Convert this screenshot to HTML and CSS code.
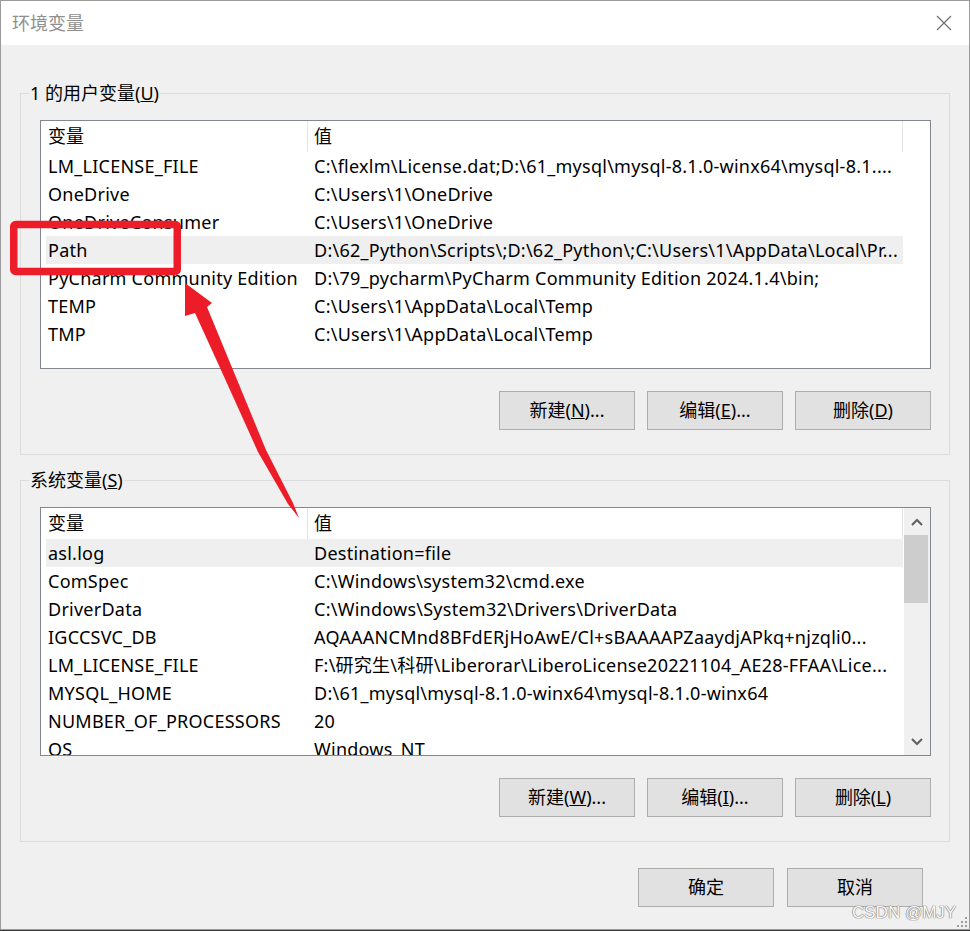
FILE: index.html
```html
<!DOCTYPE html>
<html lang="zh-CN">
<head>
<meta charset="utf-8">
<title>环境变量</title>
<link rel="stylesheet" href="styles.css">
</head>
<body>
<div class="window">
  <div class="titlebar">
    <span class="title">环境变量</span>
    <svg class="close" viewBox="0 0 16 16" width="16" height="16"><path d="M1 1L15 15M15 1L1 15" stroke="#6f6f6f" stroke-width="1.2" fill="none"/></svg>
  </div>
  <div class="content">
    <fieldset class="group">
      <legend>1 的用户变量(<u>U</u>)</legend>
      <div class="list">
        <div class="list-body">
          <div class="row head"><div class="c1">变量</div><div class="c2">值</div></div>
          <div class="row"><div class="c1">LM_LICENSE_FILE</div><div class="c2">C:\flexlm\License.dat;D:\61_mysql\mysql-8.1.0-winx64\mysql-8.1....</div></div>
          <div class="row"><div class="c1">OneDrive</div><div class="c2">C:\Users\1\OneDrive</div></div>
          <div class="row"><div class="c1">OneDriveConsumer</div><div class="c2">C:\Users\1\OneDrive</div></div>
          <div class="row sel"><div class="c1">Path</div><div class="c2">D:\62_Python\Scripts\;D:\62_Python\;C:\Users\1\AppData\Local\Pr...</div></div>
          <div class="row"><div class="c1">PyCharm Community Edition</div><div class="c2">D:\79_pycharm\PyCharm Community Edition 2024.1.4\bin;</div></div>
          <div class="row"><div class="c1">TEMP</div><div class="c2">C:\Users\1\AppData\Local\Temp</div></div>
          <div class="row"><div class="c1">TMP</div><div class="c2">C:\Users\1\AppData\Local\Temp</div></div>
        </div>
      </div>
      <div class="btns">
        <button class="btn">新建(<u>N</u>)...</button>
        <button class="btn">编辑(<u>E</u>)...</button>
        <button class="btn">删除(<u>D</u>)</button>
      </div>
    </fieldset>

    <fieldset class="group">
      <legend>系统变量(<u>S</u>)</legend>
      <div class="list">
        <div class="list-body">
          <div class="row head"><div class="c1">变量</div><div class="c2">值</div></div>
          <div class="row sel"><div class="c1">asl.log</div><div class="c2">Destination=file</div></div>
          <div class="row"><div class="c1">ComSpec</div><div class="c2">C:\Windows\system32\cmd.exe</div></div>
          <div class="row"><div class="c1">DriverData</div><div class="c2">C:\Windows\System32\Drivers\DriverData</div></div>
          <div class="row"><div class="c1">IGCCSVC_DB</div><div class="c2">AQAAANCMnd8BFdERjHoAwE/Cl+sBAAAAPZaaydjAPkq+njzqli0...</div></div>
          <div class="row"><div class="c1">LM_LICENSE_FILE</div><div class="c2">F:\研究生\科研\Liberorar\LiberoLicense20221104_AE28-FFAA\Lice...</div></div>
          <div class="row"><div class="c1">MYSQL_HOME</div><div class="c2">D:\61_mysql\mysql-8.1.0-winx64\mysql-8.1.0-winx64</div></div>
          <div class="row"><div class="c1">NUMBER_OF_PROCESSORS</div><div class="c2">20</div></div>
          <div class="row"><div class="c1">OS</div><div class="c2">Windows_NT</div></div>
        </div>
        <div class="scrollbar">
          <div class="sb-btn"><svg viewBox="0 0 12 8" width="12" height="8"><path d="M1 7L6 2L11 7" stroke="#606060" stroke-width="2" fill="none"/></svg></div>
          <div class="sb-thumb"></div>
          <div class="sb-track"></div>
          <div class="sb-btn"><svg viewBox="0 0 12 8" width="12" height="8"><path d="M1 1L6 6L11 1" stroke="#606060" stroke-width="2" fill="none"/></svg></div>
        </div>
      </div>
      <div class="btns">
        <button class="btn">新建(<u>W</u>)...</button>
        <button class="btn">编辑(<u>I</u>)...</button>
        <button class="btn">删除(<u>L</u>)</button>
      </div>
    </fieldset>

    <div class="dialog-btns">
      <button class="btn">确定</button>
      <button class="btn">取消</button>
    </div>
  </div>
</div>

<svg class="annot" viewBox="0 0 970 931" width="970" height="931">
  <rect x="13.75" y="224.5" width="163.5" height="47" rx="2" fill="none" stroke="#ec1c28" stroke-width="7.5"/>
  <polygon fill="#ec1c28" points="185,283 212,303 207,307 233,370 266,450 293,503 299,518 288,504 258,452 221,370 195,313 185,316"/>
</svg>
<div class="watermark">CSDN @MJY</div>
<svg class="grip" viewBox="0 0 12 12" width="12" height="12">
  <rect x="9" y="1" width="2" height="2" fill="#a0a0a0"/>
  <rect x="5" y="5" width="2" height="2" fill="#a0a0a0"/>
  <rect x="9" y="5" width="2" height="2" fill="#a0a0a0"/>
  <rect x="1" y="9" width="2" height="2" fill="#a0a0a0"/>
  <rect x="5" y="9" width="2" height="2" fill="#a0a0a0"/>
  <rect x="9" y="9" width="2" height="2" fill="#a0a0a0"/>
</svg>
</body>
</html>
```

FILE: styles.css
```css
html, body {
  margin: 0;
  padding: 0;
  background: #3a3a3a;
}

body {
  position: relative;
  width: 970px;
  height: 931px;
  overflow: hidden;
  font-family: "Noto Sans", "Noto Sans CJK SC", sans-serif;
  font-size: 18px;
  color: #000;
}

.window {
  width: 970px;
  height: 930px;
  box-sizing: border-box;
  border: 1px solid #9b9b9b;
  background: #f0f0f0;
  display: flex;
  flex-direction: column;
}

.titlebar {
  height: 44px;
  flex: none;
  background: #fff;
  display: flex;
  align-items: center;
  justify-content: space-between;
  padding: 0 17px 0 11px;
}

.title {
  color: #8f8f8f;
  line-height: 44px;
}

.close {
  display: block;
}

.content {
  padding: 35px 19px 0 19px;
}

.group {
  margin: 0;
  padding: 0 0 24px 0;
  border: 1px solid #dcdcdc;
  min-width: 0;
}

.group + .group {
  margin-top: 12px;
}

.group legend {
  margin-left: 8px;
  padding: 0 1px;
  line-height: 26px;
}

.list {
  margin: 14px 0 0 19px;
  width: 891px;
  height: 249px;
  box-sizing: border-box;
  border: 1px solid #828790;
  background: #fff;
  display: flex;
  overflow: hidden;
}

.list-body {
  flex: 1;
  min-width: 0;
  overflow: hidden;
}

.row {
  display: flex;
  margin-left: 5px;
  width: 857px;
  height: 28px;
  line-height: 28px;
  white-space: nowrap;
  letter-spacing: 0.25px;
}

.row.head {
  height: 31px;
  line-height: 31px;
  letter-spacing: 0;
}

.row.sel {
  background: #efefef;
}

.c1 {
  flex: none;
  width: 262px;
  box-sizing: border-box;
  padding-left: 2px;
  overflow: hidden;
}

.c2 {
  flex: 1;
  min-width: 0;
  padding-left: 6px;
  overflow: hidden;
}

.head .c1 {
  border-right: 1px solid #e5e5e5;
}

.head .c2 {
  flex: none;
  width: 595px;
  box-sizing: border-box;
  border-right: 1px solid #e5e5e5;
}

.scrollbar {
  flex: none;
  width: 26px;
  background: #f0f0f0;
  display: flex;
  flex-direction: column;
}

.sb-btn {
  height: 27px;
  flex: none;
  display: flex;
  align-items: center;
  justify-content: center;
  padding-right: 1px;
}

.sb-thumb {
  height: 68px;
  flex: none;
  margin-right: 2px;
  background: #cdcdcd;
}

.sb-track {
  flex: 1;
}

.btns {
  display: flex;
  justify-content: flex-end;
  gap: 12px;
  margin: 22px 18px 0 0;
}

.dialog-btns {
  display: flex;
  justify-content: flex-end;
  gap: 13px;
  margin: 26px 27px 0 0;
}

.btn {
  width: 136px;
  height: 39px;
  box-sizing: border-box;
  border: 1px solid #adadad;
  background: #e1e1e1;
  font: inherit;
  color: #000;
  padding: 0;
  line-height: 37px;
}

.annot {
  position: absolute;
  left: 0;
  top: 0;
  pointer-events: none;
}

.watermark {
  position: absolute;
  left: 852px;
  top: 902px;
  font-family: "Liberation Sans", Arial, sans-serif;
  font-size: 17px;
  line-height: 22px;
  color: #fafafa;
  text-shadow: 0 0 1px #7a7a7a, 0 0 1px #7a7a7a, 0 0 1px #7a7a7a;
}

.grip {
  position: absolute;
  left: 956px;
  top: 916px;
}
```
